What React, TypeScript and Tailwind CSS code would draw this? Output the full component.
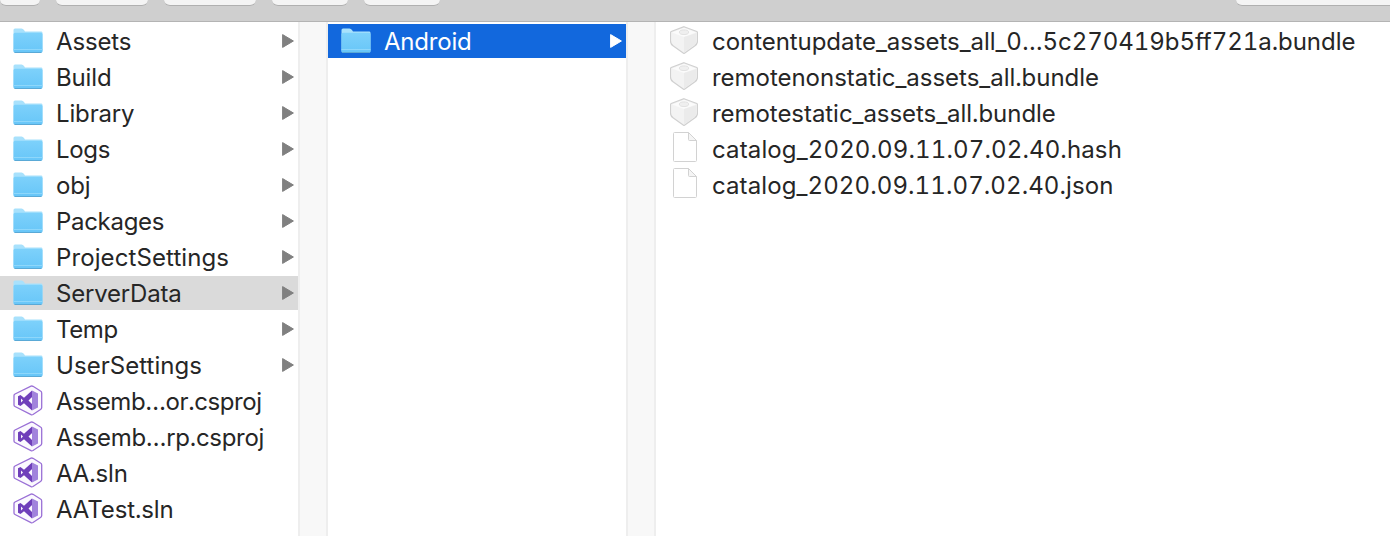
import { useId } from "react";
import type { ReactNode } from "react";

const leftItems = [
  { name: "Assets", kind: "folder", track: "tracking-[-0.15px]" },
  { name: "Build", kind: "folder", track: "tracking-[-0.15px]" },
  { name: "Library", kind: "folder", track: "tracking-[-0.15px]" },
  { name: "Logs", kind: "folder", track: "tracking-[-0.3px]" },
  { name: "obj", kind: "folder", track: "tracking-[-0.15px]" },
  { name: "Packages", kind: "folder", track: "tracking-[-0.3px]" },
  { name: "ProjectSettings", kind: "folder", track: "tracking-[0.1px]" },
  { name: "ServerData", kind: "folder", track: "tracking-[-0.2px]", active: true },
  { name: "Temp", kind: "folder", track: "tracking-[-0.4px]" },
  { name: "UserSettings", kind: "folder", track: "tracking-[0.05px]" },
  { name: "Assemb…or.csproj", kind: "vs", track: "tracking-[-0.4px]" },
  { name: "Assemb…rp.csproj", kind: "vs", track: "tracking-[-0.3px]" },
  { name: "AA.sln", kind: "vs", track: "tracking-[-0.15px]" },
  { name: "AATest.sln", kind: "vs", track: "tracking-[-0.1px]" },
];

const rightItems = [
  { name: "contentupdate_assets_all_0…5c270419b5ff721a.bundle", kind: "bundle", track: "tracking-[-0.05px]" },
  { name: "remotenonstatic_assets_all.bundle", kind: "bundle", track: "tracking-[-0.03px]" },
  { name: "remotestatic_assets_all.bundle", kind: "bundle", track: "tracking-[-0.05px]" },
  { name: "catalog_2020.09.11.07.02.40.hash", kind: "doc", track: "tracking-[0.13px]" },
  { name: "catalog_2020.09.11.07.02.40.json", kind: "doc", track: "tracking-[0.1px]" },
];

function FolderIcon() {
  const id = useId();
  return (
    <svg width="30" height="25" viewBox="0 0 30 25" className="shrink-0 -translate-y-px">
      <defs>
        <linearGradient id={id} x1="0" y1="0" x2="0" y2="1">
          <stop offset="0" stopColor="#7dd1fb" />
          <stop offset="1" stopColor="#68c6f8" />
        </linearGradient>
      </defs>
      <path d="M0.5 23V2Q0.5 0.5 2 0.5H8.5Q10 0.5 11 2L12 3.5H28.5Q29.5 3.5 29.5 5V23Q29.5 24.5 28 24.5H2Q0.5 24.5 0.5 23Z" fill="#a8e1fc" />
      <path d="M0.5 23V6.5Q0.5 4.8 2 4.8H28Q29.5 4.8 29.5 6.5V23Q29.5 24.5 28 24.5H2Q0.5 24.5 0.5 23Z" fill={`url(#${id})`} />
      <path d="M0.5 21.5H29.5" stroke="#8ed7fb" strokeWidth="1" />
      <path d="M1.5 24.5H28.5" stroke="#5aa9d6" strokeWidth="1" />
    </svg>
  );
}

function VsIcon() {
  return (
    <svg width="30" height="31" viewBox="0 0 30 31" className="shrink-0 -translate-y-px">
      <path d="M1 10.5Q1 9.5 2 9L18 1.2Q19 0.8 20 1.3L27.5 6Q28.7 6.7 28.7 8V22.5Q28.7 23.8 27.5 24.5L20 29.5Q19 30 18 29.6L2 21.5Q1 21 1 20Z" fill="#fbf9fe" stroke="#9a70d6" strokeWidth="1.3" />
      <path d="M19 5.5V25.5L11 18.3L7.5 21L5 19.8V11.2L7.5 10L11 12.7ZM19 12L15.5 15.5L19 19ZM8 13.5V17.5L10 15.5Z" fill="#6f3fba" fillRule="evenodd" />
      <path d="M19 5.5L25 8.5V22.5L19 25.5Z" fill="#a183dc" />
    </svg>
  );
}

function BundleIcon() {
  return (
    <svg width="28" height="28" viewBox="0 0 28 28" className="shrink-0 -translate-y-px">
      <path d="M14 0.7L26.8 5.5Q27.5 5.8 27.5 6.5V15Q27.5 18 25 19.8L14.5 27.2Q14 27.5 13.5 27.2L3 19.8Q0.5 18 0.5 15V6.5Q0.5 5.8 1.2 5.5Z" fill="#f3f3f3" stroke="#d0d0d0" strokeWidth="1.2" />
      <path d="M2 6.5L14 11L26 6.5L14 2Z" fill="#fbfbfb" />
      <path d="M14 11V26.5L24.5 19Q26.5 17.5 26.5 15V7Z" fill="#ebebeb" />
      <ellipse cx="14" cy="6.2" rx="4.6" ry="2.3" fill="#efefef" stroke="#dcdcdc" strokeWidth="0.8" />
    </svg>
  );
}

function DocIcon() {
  return (
    <svg width="24" height="30" viewBox="0 0 24 30" className="shrink-0 ml-[3px] -translate-y-0.5">
      <path d="M0.5 1.5Q0.5 0.5 1.5 0.5H15.5L23.5 8.5V28.5Q23.5 29.5 22.5 29.5H1.5Q0.5 29.5 0.5 28.5Z" fill="#fff" stroke="#d2d2d2" strokeWidth="1" />
      <path d="M15.5 0.5V7.5Q15.5 8.5 16.5 8.5H23.5Z" fill="#f5f5f5" stroke="#d2d2d2" strokeWidth="1" strokeLinejoin="round" />
    </svg>
  );
}

function Arrow({ color }: { color: string }) {
  return (
    <svg width="12" height="14" viewBox="0 0 12 14" className="shrink-0">
      <path d="M0.6 0.6L11.4 7L0.6 13.4Z" fill={color} stroke={color} strokeWidth="1" strokeLinejoin="round" />
    </svg>
  );
}

function iconFor(kind: string): ReactNode {
  if (kind === "folder") return <FolderIcon />;
  if (kind === "vs") return <VsIcon />;
  if (kind === "bundle") return <BundleIcon />;
  return <DocIcon />;
}

export default function App() {
  return (
    <div
      className="w-[1390px] h-[536px] overflow-hidden bg-white flex flex-col text-[#262626] text-[24px] leading-[34px] tabular-nums"
      style={{ fontFamily: "Inter, 'Noto Sans', sans-serif" }}
    >
      {/* Toolbar */}
      <div className="h-[22px] shrink-0 bg-[#cfcfcf] border-b border-b-[#b4b4b4] flex gap-4">
        <div className="w-10 h-1.5 bg-[#f4f4f4] rounded-b-lg border-b border-b-[#b0b0b0]" />
        <div className="w-[92px] h-1.5 bg-[#f4f4f4] rounded-b-lg border-b border-b-[#b0b0b0]" />
        <div className="w-[92px] h-1.5 bg-[#f4f4f4] rounded-b-lg border-b border-b-[#b0b0b0]" />
        <div className="w-[76px] h-1.5 bg-[#f4f4f4] rounded-b-lg border-b border-b-[#b0b0b0]" />
        <div className="w-[76px] h-1.5 bg-[#f4f4f4] rounded-b-lg border-b border-b-[#b0b0b0]" />
        <div className="ml-auto w-[154px] h-1.5 bg-[#f4f4f4] rounded-bl-lg border-b border-b-[#b0b0b0]" />
      </div>

      <div className="flex-1 flex min-h-0">
        {/* First column */}
        <div className="w-[298px] shrink-0 pt-0.5 flex flex-col gap-0.5">
          {leftItems.map((item) => (
            <div
              key={item.name}
              className={`h-[34px] shrink-0 flex items-center pl-[13px] pr-1 ${item.active ? "bg-[#dadada]" : ""}`}
            >
              <div className="w-[43px] shrink-0 flex items-center">{iconFor(item.kind)}</div>
              <span className={`flex-1 whitespace-nowrap pt-0.5 ${item.track}`}>{item.name}</span>
              {item.kind === "folder" && <Arrow color="#808080" />}
            </div>
          ))}
        </div>
        <div className="w-[30px] shrink-0 bg-[#f8f8f8] border-x-2 border-x-[#eeeeee]" />

        {/* Second column */}
        <div className="w-[298px] shrink-0 pt-0.5">
          <div className="h-[34px] flex items-center pl-[13px] pr-1 bg-[#1268dd] text-white">
            <div className="w-[43px] shrink-0 flex items-center"><FolderIcon /></div>
            <span className="flex-1 pt-0.5 tracking-[-0.2px]">Android</span>
            <Arrow color="#ffffff" />
          </div>
        </div>
        <div className="w-[30px] shrink-0 bg-[#f8f8f8] border-x-2 border-x-[#eeeeee]" />

        {/* Third column */}
        <div className="flex-1 pt-0.5 flex flex-col gap-0.5">
          {rightItems.map((item) => (
            <div key={item.name} className="h-[34px] shrink-0 flex items-center pl-[14px]">
              <div className="w-[42px] shrink-0 flex items-center">{iconFor(item.kind)}</div>
              <span className={`whitespace-nowrap pt-0.5 ${item.track}`}>{item.name}</span>
            </div>
          ))}
        </div>
      </div>
    </div>
  );
}
